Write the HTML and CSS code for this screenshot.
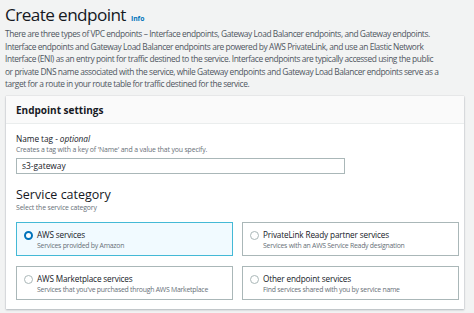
FILE: index.html
```html
<!DOCTYPE html>
<html>
<head>
<meta charset="utf-8">
<link rel="stylesheet" href="styles.css">
</head>
<body>
<div class="page">
  <div class="title-row">
    <h1 class="title">Create endpoint</h1>
    <span class="info">Info</span>
  </div>
  <p class="desc"><span class="line">There are three types of VPC endpoints – Interface endpoints, Gateway Load Balancer endpoints, and Gateway endpoints.</span>
<span class="line">Interface endpoints and Gateway Load Balancer endpoints are powered by AWS PrivateLink, and use an Elastic Network</span>
<span class="line">Interface (ENI) as an entry point for traffic destined to the service. Interface endpoints are typically accessed using the public</span>
<span class="line">or private DNS name associated with the service, while Gateway endpoints and Gateway Load Balancer endpoints serve as a</span>
<span class="line">target for a route in your route table for traffic destined for the service.</span></p>
  <div class="panel">
    <div class="panel-head">Endpoint settings</div>
    <div class="panel-body">
      <div class="field">
        <div class="label">Name tag - <i>optional</i></div>
        <div class="hint">Creates a tag with a key of 'Name' and a value that you specify.</div>
        <div class="input">s3-gateway</div>
      </div>
      <div class="section">
        <div class="sec-title">Service category</div>
        <div class="hint">Select the service category</div>
      </div>
      <div class="tiles">
        <div class="tile selected">
          <span class="radio on"></span>
          <div class="tile-text">
            <div class="tile-label">AWS services</div>
            <div class="tile-sub">Services provided by Amazon</div>
          </div>
        </div>
        <div class="tile">
          <span class="radio"></span>
          <div class="tile-text">
            <div class="tile-label">PrivateLink Ready partner services</div>
            <div class="tile-sub">Services with an AWS Service Ready designation</div>
          </div>
        </div>
        <div class="tile">
          <span class="radio"></span>
          <div class="tile-text">
            <div class="tile-label">AWS Marketplace services</div>
            <div class="tile-sub">Services that you've purchased through AWS Marketplace</div>
          </div>
        </div>
        <div class="tile">
          <span class="radio"></span>
          <div class="tile-text">
            <div class="tile-label">Other endpoint services</div>
            <div class="tile-sub">Find services shared with you by service name</div>
          </div>
        </div>
      </div>
    </div>
  </div>
</div>
</body>
</html>
```
FILE: styles.css
```css
html, body {
  margin: 0;
  padding: 0;
  background: #f2f3f3;
  width: 474px;
  height: 313px;
  overflow: hidden;
}
.page {
  font-family: "Open Sans", "Noto Sans", sans-serif;
  color: #16191f;
  padding: 4px 5px 0 5px;
}
.title-row {
  display: flex;
  align-items: baseline;
  gap: 5px;
}
.title {
  margin: 0;
  font-size: 17.2px;
  font-weight: 400;
  line-height: 22px;
  letter-spacing: -0.6px;
}
.info {
  font-size: 6.8px;
  font-weight: 700;
  color: #0073bb;
}
.desc {
  margin: 2px 0 0 0;
  font-size: 8.4px;
  line-height: 12.6px;
  letter-spacing: -0.42px;
  color: #4f565f;
}
.line {
  display: block;
  white-space: nowrap;
}
.panel {
  margin: 5px 5px 0 1px;
  background: #fff;
  box-shadow: 0 1px 2px rgba(0,22,40,0.25), 0 0 1px rgba(0,22,40,0.2);
}
.panel-head {
  background: #fafafa;
  border-bottom: 1px solid #eaeded;
  padding: 6px 10px 5px 10px;
  font-size: 10px;
  font-weight: 700;
  line-height: 16px;
}
.panel-body {
  padding: 9px 10px 9px 10px;
}
.label {
  font-size: 8.3px;
  line-height: 12px;
  letter-spacing: -0.05px;
  color: #16191f;
}
.hint {
  font-size: 6.9px;
  line-height: 10px;
  letter-spacing: -0.15px;
  color: #687078;
}
.input {
  margin-top: 3px;
  width: 317px;
  height: 14px;
  border: 1px solid #aab7b8;
  padding: 0 5px;
  font-size: 8.4px;
  line-height: 14px;
}
.section {
  margin-top: 13px;
}
.sec-title {
  font-size: 12.5px;
  line-height: 16px;
}
.tiles {
  margin-top: 9px;
  display: grid;
  grid-template-columns: 217px 217px;
  column-gap: 9px;
  row-gap: 10px;
}
.tile {
  height: 34px;
  box-sizing: border-box;
  border: 1px solid #aab7b8;
  display: flex;
  align-items: flex-start;
  padding: 6px 7px;
  gap: 4px;
}
.tile.selected {
  background: #f1faff;
  border-color: #44b9d6;
}
.radio {
  width: 9px;
  height: 9px;
  box-sizing: border-box;
  border: 1px solid #aab7b8;
  border-radius: 50%;
  margin-top: 2px;
  flex: none;
}
.radio.on {
  border: 2.5px solid #0073bb;
  background: #fff;
}
.tile-label {
  font-size: 8.2px;
  line-height: 12px;
  letter-spacing: -0.15px;
}
.tile-sub {
  font-size: 6.9px;
  line-height: 10px;
  letter-spacing: -0.25px;
  color: #687078;
  white-space: nowrap;
}
```
